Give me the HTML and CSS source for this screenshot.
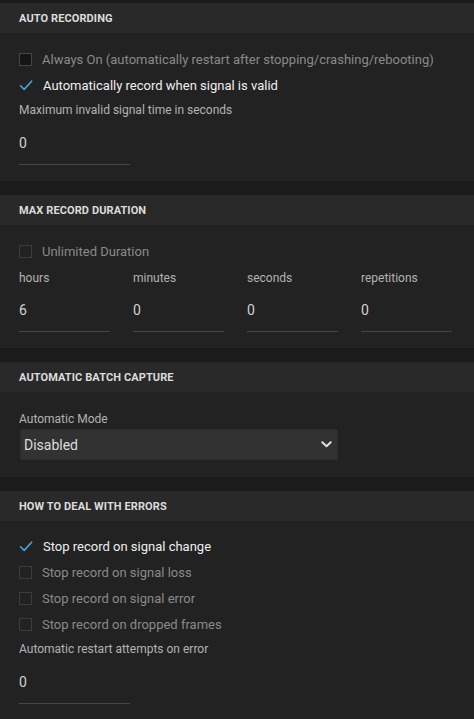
FILE: index.html
```html
<!DOCTYPE html>
<html>
<head>
<meta charset="utf-8">
<link rel="stylesheet" href="styles.css">
</head>
<body>
<div class="page">
  <section class="section">
    <div class="sec-head">AUTO RECORDING</div>
    <div class="sec-body s1">
      <div class="check-row">
        <span class="box box-dark"></span>
        <span class="check-label off">Always On (automatically restart after stopping/crashing/rebooting)</span>
      </div>
      <div class="check-row">
        <svg class="tick" width="14" height="13" viewBox="0 0 14 13"><path d="M1.5 6.8 L5.2 10.4 L12.6 2.2" fill="none" stroke="#4aa3d6" stroke-width="1.6" stroke-linecap="round" stroke-linejoin="round"/></svg>
        <span class="check-label on">Automatically record when signal is valid</span>
      </div>
      <div class="field-label">Maximum invalid signal time in seconds</div>
      <div class="field field-short">0</div>
    </div>
  </section>

  <section class="section">
    <div class="sec-head">MAX RECORD DURATION</div>
    <div class="sec-body s2">
      <div class="check-row">
        <span class="box"></span>
        <span class="check-label off">Unlimited Duration</span>
      </div>
      <div class="grid4">
        <div class="col"><div class="field-label">hours</div><div class="field">6</div></div>
        <div class="col"><div class="field-label">minutes</div><div class="field">0</div></div>
        <div class="col"><div class="field-label">seconds</div><div class="field">0</div></div>
        <div class="col"><div class="field-label">repetitions</div><div class="field">0</div></div>
      </div>
    </div>
  </section>

  <section class="section">
    <div class="sec-head">AUTOMATIC BATCH CAPTURE</div>
    <div class="sec-body s3">
      <div class="field-label small-line">Automatic Mode</div>
      <div class="select">
        <span>Disabled</span>
        <svg width="11" height="7" viewBox="0 0 11 7"><path d="M1.3 1.3 L5.5 5.3 L9.7 1.3" fill="none" stroke="#e0e0e0" stroke-width="2" stroke-linecap="round" stroke-linejoin="round"/></svg>
      </div>
    </div>
  </section>

  <section class="section">
    <div class="sec-head">HOW TO DEAL WITH ERRORS</div>
    <div class="sec-body s4">
      <div class="check-row">
        <svg class="tick" width="14" height="13" viewBox="0 0 14 13"><path d="M1.5 6.8 L5.2 10.4 L12.6 2.2" fill="none" stroke="#4aa3d6" stroke-width="1.6" stroke-linecap="round" stroke-linejoin="round"/></svg>
        <span class="check-label on">Stop record on signal change</span>
      </div>
      <div class="check-row">
        <span class="box"></span>
        <span class="check-label off">Stop record on signal loss</span>
      </div>
      <div class="check-row">
        <span class="box"></span>
        <span class="check-label off">Stop record on signal error</span>
      </div>
      <div class="check-row">
        <span class="box"></span>
        <span class="check-label off">Stop record on dropped frames</span>
      </div>
      <div class="field-label">Automatic restart attempts on error</div>
      <div class="field field-short">0</div>
    </div>
  </section>
</div>
</body>
</html>
```

FILE: styles.css
```css
html, body {
  margin: 0;
  padding: 0;
  background: #1b1b1b;
  font-family: Roboto, "Noto Sans", "Liberation Sans", sans-serif;
}

.page {
  padding-top: 3px;
  display: flex;
  flex-direction: column;
  gap: 14px;
}

.sec-head {
  height: 30px;
  background: #292929;
  padding-left: 19px;
  display: flex;
  align-items: center;
  font-size: 11px;
  font-weight: 700;
  color: #dcdcdc;
  letter-spacing: 0.1px;
}

.sec-body {
  background: #222222;
  padding: 13px 19px 16px 19px;
}

.s3 {
  padding-top: 17px;
  padding-bottom: 17px;
}

.s4 {
  padding-top: 12px;
}

.check-row {
  height: 26px;
  display: flex;
  align-items: center;
}

.box {
  width: 11px;
  height: 11px;
  border: 1px solid #3c3c3c;
  flex: none;
}

.box-dark {
  background: #161616;
  border-color: #464646;
}

.tick {
  flex: none;
}

.check-label {
  margin-left: 10px;
  font-size: 13px;
}

.check-label.on {
  color: #efefef;
}

.check-label.off {
  color: #8a8a8a;
}

.field-label {
  font-size: 12px;
  line-height: 24px;
  color: #b2b2b2;
}

.small-line {
  line-height: 20px;
}

.field {
  margin-top: 9px;
  line-height: 24px;
  padding-bottom: 9px;
  font-size: 14px;
  color: #d2d2d2;
  border-bottom: 1px solid #454545;
}

.field-short {
  width: 111px;
}

.grid4 {
  margin-top: 2px;
  display: grid;
  grid-template-columns: repeat(4, 91px);
  column-gap: 23px;
}

.grid4 .field {
  margin-top: 8px;
}

.select {
  margin-left: 1px;
  width: 318px;
  height: 31px;
  box-sizing: border-box;
  background: #323232;
  border: 1px solid #2c2c2c;
  border-radius: 2px;
  padding: 0 5px 0 3px;
  display: flex;
  align-items: center;
  justify-content: space-between;
  font-size: 14px;
  color: #dddddd;
}
```
